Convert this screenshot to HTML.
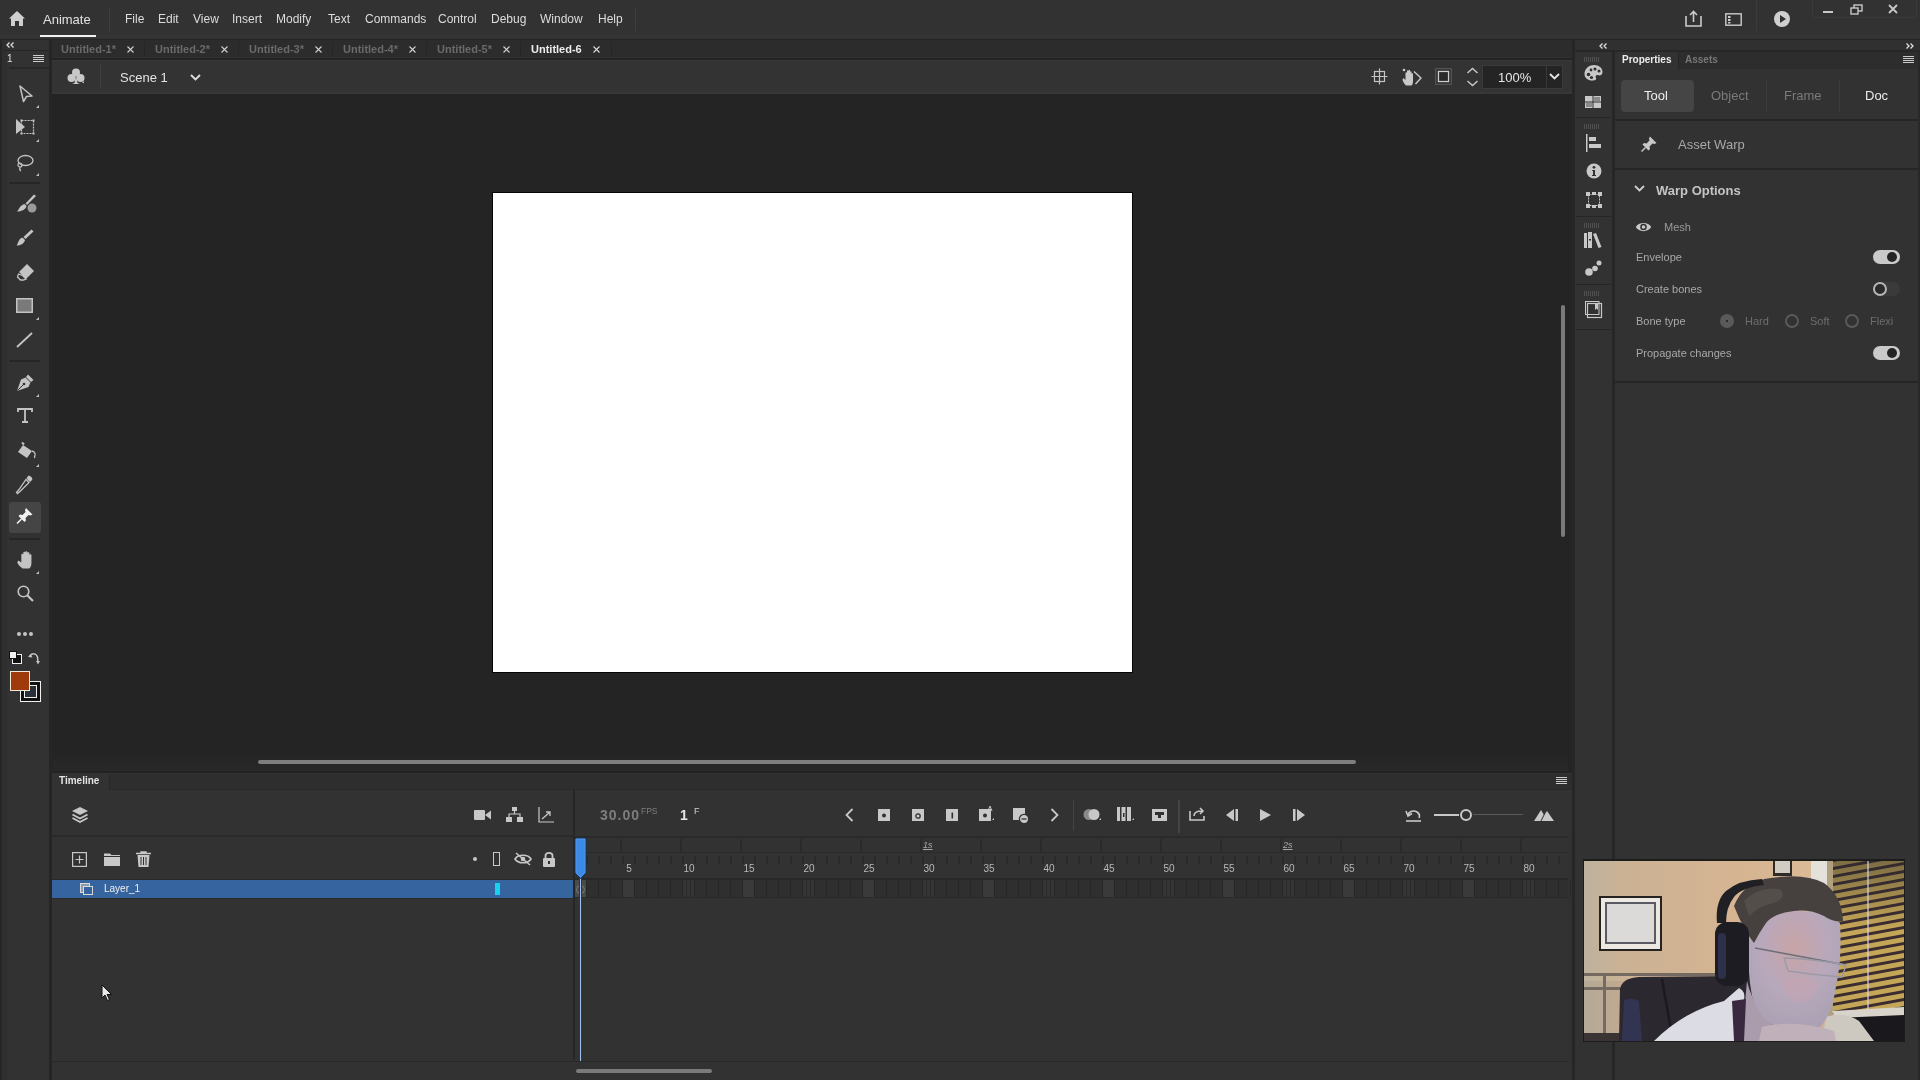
<!DOCTYPE html>
<html><head><meta charset="utf-8">
<style>
*{margin:0;padding:0;box-sizing:border-box}
html,body{width:1920px;height:1080px;overflow:hidden;background:#323232;-webkit-font-smoothing:antialiased;font-family:"Liberation Sans",sans-serif;color:#d0d0d0}
.a{position:absolute}
.t{position:absolute;white-space:nowrap;line-height:1;will-change:transform}
svg{position:absolute;overflow:visible}
.mi{will-change:transform;position:absolute;top:13px;font-size:12px;color:#dcdcdc;white-space:nowrap;line-height:1}
.tab{will-change:transform;position:absolute;top:44px;font-size:11px;font-weight:bold;color:#6a6a6a;white-space:nowrap;line-height:1}
.tsep{position:absolute;top:41px;width:1px;height:15px;background:#262626}
.ind{position:absolute;width:0;height:0;border-left:3px solid transparent;border-bottom:3px solid #bdbdbd}
.tsepH{position:absolute;left:9px;width:31px;height:2px;background:#262626}
.pl{will-change:transform;position:absolute;font-size:11px;color:#a8a8a8;white-space:nowrap;line-height:1}
</style></head><body>

<!-- ================= MENU BAR ================= -->
<div class="a" style="left:0;top:0;width:1920px;height:39px;background:#323232"></div>
<div class="a" style="left:0;top:35px;width:1920px;height:3px;background:#343434"></div>
<div class="a" style="left:0;top:39px;width:1920px;height:1px;background:#262626"></div>
<!-- home -->
<svg style="left:8px;top:10px" width="18" height="17" viewBox="0 0 18 17"><path d="M9 1 L17 8.5 L15 8.5 L15 16 L11 16 L11 11 L7 11 L7 16 L3 16 L3 8.5 L1 8.5 Z" fill="#cfcfcf"/></svg>
<div class="t" style="left:43px;top:13px;font-size:13px;color:#e2e2e2">Animate</div>
<div class="a" style="left:40px;top:35px;width:56px;height:2px;background:#f2f2f2"></div>
<div class="a" style="left:109px;top:8px;width:1px;height:24px;background:#3e3e3e"></div>
<div class="mi" style="left:125px">File</div>
<div class="mi" style="left:158px">Edit</div>
<div class="mi" style="left:193px">View</div>
<div class="mi" style="left:232px">Insert</div>
<div class="mi" style="left:276px">Modify</div>
<div class="mi" style="left:328px">Text</div>
<div class="mi" style="left:365px">Commands</div>
<div class="mi" style="left:438px">Control</div>
<div class="mi" style="left:491px">Debug</div>
<div class="mi" style="left:540px">Window</div>
<div class="mi" style="left:598px">Help</div>
<div class="a" style="left:635px;top:8px;width:1px;height:23px;background:#3e3e3e"></div>
<!-- right icons -->
<svg style="left:1685px;top:10px" width="17" height="17" viewBox="0 0 17 17"><path d="M1 6 V16 H16 V6" fill="none" stroke="#cccccc" stroke-width="1.6"/><path d="M8.5 12 V1.5 M5 5 L8.5 1.5 L12 5" fill="none" stroke="#cccccc" stroke-width="1.6"/></svg>
<svg style="left:1725px;top:13px" width="17" height="13" viewBox="0 0 17 13"><rect x="0.8" y="0.8" width="15.4" height="11.4" fill="none" stroke="#cccccc" stroke-width="1.4"/><rect x="3" y="3" width="2.5" height="2" fill="#cccccc"/><rect x="3" y="6" width="2.5" height="2" fill="#cccccc"/><rect x="3" y="9" width="2.5" height="1.5" fill="#cccccc"/></svg>
<div class="a" style="left:1756px;top:0;width:1px;height:31px;background:#3c3c3c"></div>
<svg style="left:1773px;top:10px" width="18" height="18" viewBox="0 0 18 18"><circle cx="9" cy="9" r="8" fill="#cfcfcf"/><path d="M7 5 L13 9 L7 13 Z" fill="#303030"/></svg>
<div class="a" style="left:1812px;top:-1px;width:105px;height:19px;border:1px solid #3a3a3a;border-radius:0 0 3px 3px"></div>
<div class="a" style="left:1823px;top:11px;width:10px;height:2px;background:#c8c8c8"></div>
<svg style="left:1850px;top:4px" width="13" height="11" viewBox="0 0 13 11"><rect x="4" y="1" width="8" height="6" fill="none" stroke="#c8c8c8" stroke-width="1.4"/><rect x="1" y="4" width="7" height="6" fill="#303030" stroke="#c8c8c8" stroke-width="1.4"/></svg>
<svg style="left:1888px;top:4px" width="10" height="10" viewBox="0 0 10 10"><path d="M1 1 L9 9 M9 1 L1 9" stroke="#c8c8c8" stroke-width="1.8"/></svg>

<!-- ================= LEFT TOOLBAR ================= -->
<div class="a" style="left:0;top:40px;width:49px;height:1040px;background:#323232"></div>
<div class="a" style="left:0;top:40px;width:2px;height:1040px;background:#262626"></div>
<div class="a" style="left:2px;top:40px;width:5px;height:1040px;background:#2f2f2f"></div>
<div class="a" style="left:49px;top:40px;width:3px;height:1040px;background:#252525"></div>
<svg style="left:6px;top:42px" width="9" height="6" viewBox="0 0 9 6"><path d="M3.5 0.5 L1 3 L3.5 5.5 M7.5 0.5 L5 3 L7.5 5.5" fill="none" stroke="#e0e0e0" stroke-width="1.3"/></svg>
<div class="a" style="left:3px;top:50px;width:46px;height:1px;background:#262626"></div>
<div class="t" style="left:7px;top:54px;font-size:10px;color:#e0e0e0">1</div>
<svg style="left:33px;top:55px" width="11" height="8" viewBox="0 0 11 8"><path d="M0 0.5H11M0 2.5H11M0 4.5H11M0 6.5H11" stroke="#cccccc" stroke-width="1"/></svg>
<div class="a" style="left:9px;top:67px;width:40px;height:2px;background:#282828"></div>


<!-- ================= DOC TABS ================= -->
<div class="a" style="left:52px;top:40px;width:1520px;height:17px;background:#2c2c2c"></div>
<div class="a" style="left:52px;top:57px;width:1520px;height:1px;background:#313131"></div>
<div class="a" style="left:52px;top:58px;width:1520px;height:2px;background:#232323"></div>
<div class="tab" style="left:61px">Untitled-1*</div>
<div class="tab" style="left:155px">Untitled-2*</div>
<div class="tab" style="left:249px">Untitled-3*</div>
<div class="tab" style="left:343px">Untitled-4*</div>
<div class="tab" style="left:437px">Untitled-5*</div>
<div class="tab" style="left:531px;color:#ececec">Untitled-6</div>
<svg style="left:127px;top:46px" width="7" height="7" viewBox="0 0 7 7"><path d="M0.5 0.5L6.5 6.5M6.5 0.5L0.5 6.5" stroke="#cfcfcf" stroke-width="1.1"/></svg>
<svg style="left:221px;top:46px" width="7" height="7" viewBox="0 0 7 7"><path d="M0.5 0.5L6.5 6.5M6.5 0.5L0.5 6.5" stroke="#cfcfcf" stroke-width="1.1"/></svg>
<svg style="left:315px;top:46px" width="7" height="7" viewBox="0 0 7 7"><path d="M0.5 0.5L6.5 6.5M6.5 0.5L0.5 6.5" stroke="#cfcfcf" stroke-width="1.1"/></svg>
<svg style="left:409px;top:46px" width="7" height="7" viewBox="0 0 7 7"><path d="M0.5 0.5L6.5 6.5M6.5 0.5L0.5 6.5" stroke="#cfcfcf" stroke-width="1.1"/></svg>
<svg style="left:503px;top:46px" width="7" height="7" viewBox="0 0 7 7"><path d="M0.5 0.5L6.5 6.5M6.5 0.5L0.5 6.5" stroke="#cfcfcf" stroke-width="1.1"/></svg>
<svg style="left:593px;top:46px" width="7" height="7" viewBox="0 0 7 7"><path d="M0.5 0.5L6.5 6.5M6.5 0.5L0.5 6.5" stroke="#dcdcdc" stroke-width="1.1"/></svg>
<div class="tsep" style="left:144px"></div>
<div class="tsep" style="left:238px"></div>
<div class="tsep" style="left:332px"></div>
<div class="tsep" style="left:426px"></div>
<div class="tsep" style="left:520px"></div>
<div class="tsep" style="left:611px"></div>

<!-- ================= SCENE BAR ================= -->
<div class="a" style="left:52px;top:60px;width:1520px;height:34px;background:#333333"></div>
<div class="a" style="left:52px;top:60px;width:1520px;height:1px;background:#383838"></div>
<div class="a" style="left:52px;top:92px;width:1520px;height:2px;background:#373737"></div>
<svg style="left:67px;top:68px" width="19" height="18" viewBox="0 0 19 18"><circle cx="9" cy="4.5" r="4" fill="#c8c8c8"/><circle cx="4.5" cy="10" r="4" fill="#c8c8c8"/><circle cx="13.5" cy="10" r="4" fill="#c8c8c8"/><path d="M9 7 L7.5 15 L5 16 H13 L10.5 15 Z" fill="#c8c8c8"/><path d="M15 15 L17 15 L17 13 Z" fill="#c8c8c8"/></svg>
<div class="a" style="left:100px;top:64px;width:1px;height:25px;background:#3e3e3e"></div>
<div class="t" style="left:120px;top:71px;font-size:13px;color:#e2e2e2">Scene 1</div>
<svg style="left:190px;top:74px" width="11" height="7" viewBox="0 0 11 7"><path d="M1 1 L5.5 5.5 L10 1" fill="none" stroke="#e0e0e0" stroke-width="1.8"/></svg>

<svg style="left:1371px;top:68px" width="17" height="17" viewBox="0 0 17 17"><rect x="3.5" y="3.5" width="10" height="10" fill="none" stroke="#c4c4c4" stroke-width="1.2"/><path d="M8.5 0.5V16.5M0.5 8.5H16.5" stroke="#c4c4c4" stroke-width="1.2"/></svg>
<svg style="left:1401px;top:68px" width="22" height="18" viewBox="0 0 22 18"><path d="M5 17.5 C3 15.5 1.5 13 1.5 11.5 L2.5 10 L4.5 12 V5 C4.5 4 6 4 6 5 V9.5 V3 C6 2 7.5 2 7.5 3 V9.5 V2.5 C7.5 1.5 9 1.5 9 2.5 V9.5 V4 C9 3 10.5 3 10.5 4 V9.5 V6 C10.5 5 12 5 12 6 V13 C12 16 11 17.5 10 17.5 Z" fill="#c8c8c8"/><path d="M13 3.5 L20 10 L14.5 16" fill="none" stroke="#c8c8c8" stroke-width="1.4"/><circle cx="3" cy="2" r="1.3" fill="#c8c8c8"/></svg>
<svg style="left:1435px;top:68px" width="17" height="17" viewBox="0 0 17 17"><rect x="0.5" y="0.5" width="16" height="16" fill="#3a3a3a" stroke="#707070" stroke-dasharray="1 1"/><rect x="3.5" y="3.5" width="10" height="10" fill="#2a2a2a" stroke="#cfcfcf" stroke-width="1.2"/></svg>
<svg style="left:1466px;top:67px" width="13" height="20" viewBox="0 0 13 20"><path d="M1.5 6 L6.5 1.5 L11.5 6 M1.5 14 L6.5 18.5 L11.5 14" fill="none" stroke="#c8c8c8" stroke-width="1.4"/></svg>
<div class="a" style="left:1482px;top:65px;width:81px;height:24px;background:#242424;border:1px solid #3a3a3a"></div>
<div class="a" style="left:1546px;top:66px;width:1px;height:22px;background:#3a3a3a"></div>
<div class="t" style="left:1498px;top:71px;font-size:13px;color:#e6e6e6">100%</div>
<svg style="left:1549px;top:73px" width="11" height="7" viewBox="0 0 11 7"><path d="M1 1 L5.5 5.5 L10 1" fill="none" stroke="#e6e6e6" stroke-width="1.8"/></svg>

<!-- ================= PASTEBOARD ================= -->
<div class="a" style="left:52px;top:94px;width:1520px;height:677px;background:#242424"></div>
<div class="a" style="left:492px;top:192px;width:641px;height:481px;background:#ffffff;border:1px solid #050505"></div>
<div class="a" style="left:1561px;top:305px;width:4px;height:232px;background:#7a7a7a;border-radius:2px"></div>
<div class="a" style="left:52px;top:752px;width:1516px;height:19px;background:linear-gradient(#242424,#282828)"></div>
<div class="a" style="left:258px;top:760px;width:1098px;height:4px;background:#7e7e7e;border-radius:2px"></div>
<div class="a" style="left:52px;top:771px;width:1520px;height:2px;background:#232323"></div>


<!-- ================= TIMELINE ================= -->
<div class="a" style="left:52px;top:773px;width:1520px;height:307px;background:#323232"></div>
<div class="a" style="left:110px;top:774px;width:1462px;height:16px;background:#2e2e2e"></div>
<div class="a" style="left:110px;top:789px;width:1462px;height:1px;background:#2a2a2a"></div>
<div class="a" style="left:109px;top:774px;width:1px;height:16px;background:#272727"></div>
<div class="t" style="left:59px;top:776px;font-size:10px;font-weight:bold;color:#e4e4e4">Timeline</div>
<svg style="left:1556px;top:777px" width="11" height="7" viewBox="0 0 11 7"><path d="M0 0.5H11M0 2.5H11M0 4.5H11M0 6.5H11" stroke="#cccccc" stroke-width="1"/></svg>
<!-- toolbar row -->
<svg style="left:71px;top:806px" width="18" height="18" viewBox="0 0 18 18"><path d="M9 1 L17 5 L9 9 L1 5 Z" fill="#c8c8c8"/><path d="M1.5 8.5 L9 12.5 L16.5 8.5" fill="none" stroke="#c8c8c8" stroke-width="1.8"/><path d="M1.5 12 L9 16 L16.5 12" fill="none" stroke="#c8c8c8" stroke-width="1.8"/></svg>
<svg style="left:474px;top:809px" width="17" height="12" viewBox="0 0 17 12"><rect x="0" y="1" width="11" height="10" rx="1" fill="#c8c8c8"/><path d="M11 6 L17 1.5 V10.5 Z" fill="#c8c8c8"/></svg>
<svg style="left:506px;top:807px" width="17" height="16" viewBox="0 0 17 16"><rect x="6" y="0" width="5" height="4" fill="#c8c8c8"/><path d="M8.5 4V7M3 10V7H14V10" fill="none" stroke="#c8c8c8" stroke-width="1.2"/><rect x="0" y="10" width="6" height="5" fill="#c8c8c8"/><rect x="11" y="10" width="6" height="5" fill="#c8c8c8"/></svg>
<svg style="left:538px;top:807px" width="16" height="16" viewBox="0 0 16 16"><path d="M1 0V15H16" fill="none" stroke="#c8c8c8" stroke-width="1.2"/><path d="M4 12L12 5M8 5H12V9" fill="none" stroke="#c8c8c8" stroke-width="1.3"/></svg>
<div class="a" style="left:52px;top:835px;width:521px;height:2px;background:#2a2a2a"></div>
<div class="a" style="left:573px;top:790px;width:2px;height:270px;background:#262626"></div>
<div class="t" style="left:600px;top:808px;font-size:14px;font-weight:bold;letter-spacing:1px;color:#7e7e7e">30.00</div>
<div class="t" style="left:641px;top:807px;font-size:8.5px;color:#7e7e7e">FPS</div>
<div class="t" style="left:680px;top:808px;font-size:14px;font-weight:bold;color:#e6e6e6">1</div>
<div class="t" style="left:694px;top:807px;font-size:9px;color:#d0d0d0">F</div>
<svg style="left:845px;top:808px" width="9" height="14" viewBox="0 0 9 14"><path d="M7.5 1 L1.5 7 L7.5 13" fill="none" stroke="#c8c8c8" stroke-width="1.8"/></svg>
<svg style="left:878px;top:809px" width="12" height="12" viewBox="0 0 12 12"><rect width="12" height="12" fill="#c8c8c8"/><circle cx="6" cy="6.5" r="2" fill="#303030"/></svg>
<svg style="left:912px;top:809px" width="12" height="12" viewBox="0 0 12 12"><rect width="12" height="12" fill="#c8c8c8"/><circle cx="6" cy="7" r="2.2" fill="none" stroke="#303030" stroke-width="1.3"/></svg>
<svg style="left:946px;top:809px" width="12" height="12" viewBox="0 0 12 12"><rect width="12" height="12" fill="#c8c8c8"/><rect x="5.5" y="3.5" width="1.6" height="6" fill="#303030"/></svg>
<svg style="left:979px;top:806px" width="15" height="16" viewBox="0 0 15 16"><rect x="0" y="3" width="12" height="12" fill="#c8c8c8"/><circle cx="6" cy="9.5" r="2" fill="#303030"/><path d="M9 5 L11 0 L13 5" fill="none" stroke="#c8c8c8" stroke-width="1"/><path d="M13 14 L15 14 L15 12 Z" fill="#c8c8c8"/></svg>
<svg style="left:1013px;top:808px" width="17" height="16" viewBox="0 0 17 16"><rect x="0" y="0" width="12" height="12" fill="#c8c8c8"/><circle cx="11" cy="11" r="4.6" fill="#c8c8c8" stroke="#303030" stroke-width="1.2"/><path d="M8.5 11H13.5" stroke="#303030" stroke-width="1.3"/></svg>
<svg style="left:1050px;top:808px" width="9" height="14" viewBox="0 0 9 14"><path d="M1.5 1 L7.5 7 L1.5 13" fill="none" stroke="#c8c8c8" stroke-width="1.8"/></svg>
<div class="a" style="left:1073px;top:800px;width:1px;height:31px;background:#444"></div>
<svg style="left:1083px;top:807px" width="18" height="15" viewBox="0 0 18 15"><circle cx="6" cy="7.5" r="5.5" fill="#8a8a8a"/><circle cx="11" cy="7.5" r="5.5" fill="#c8c8c8"/><path d="M16 13 L18 13 L18 11 Z" fill="#c8c8c8"/></svg>
<svg style="left:1117px;top:807px" width="18" height="15" viewBox="0 0 18 15"><rect x="0" y="0" width="3" height="14" fill="#c8c8c8"/><rect x="4.5" y="0" width="4" height="14" fill="#c8c8c8"/><rect x="10" y="0" width="4" height="14" fill="#c8c8c8"/><rect x="6" y="6" width="1.5" height="4" fill="#303030"/><path d="M15 13 L17 13 L17 11 Z" fill="#c8c8c8"/></svg>
<svg style="left:1152px;top:809px" width="15" height="12" viewBox="0 0 15 12"><rect width="15" height="12" fill="#c8c8c8"/><path d="M3 3 H12 V6 H9 V9 H6 V6 H3 Z" fill="#303030"/></svg>
<div class="a" style="left:1178px;top:800px;width:2px;height:33px;background:#444"></div>
<svg style="left:1189px;top:806px" width="17" height="16" viewBox="0 0 17 16"><path d="M1 5V14H15V10" fill="none" stroke="#c8c8c8" stroke-width="1.6"/><path d="M5 10C5 6 8 5 13 5M11 2L14 5L11 8" fill="none" stroke="#c8c8c8" stroke-width="1.6"/></svg>
<svg style="left:1225px;top:808px" width="14" height="14" viewBox="0 0 14 14"><path d="M9 1 L1 7 L9 13 Z" fill="#c8c8c8"/><rect x="10.5" y="1" width="2.5" height="12" fill="#c8c8c8"/></svg>
<svg style="left:1259px;top:808px" width="12" height="14" viewBox="0 0 12 14"><path d="M1 1 L12 7 L1 13 Z" fill="#c8c8c8"/></svg>
<svg style="left:1292px;top:808px" width="14" height="14" viewBox="0 0 14 14"><rect x="1" y="1" width="2.5" height="12" fill="#c8c8c8"/><path d="M5 1 L13 7 L5 13 Z" fill="#c8c8c8"/></svg>
<svg style="left:1405px;top:808px" width="17" height="14" viewBox="0 0 17 14"><path d="M3 7 C4 3 9 2 12 4 C14 5.5 15 8 14 10" fill="none" stroke="#c8c8c8" stroke-width="1.6"/><path d="M1 3 L3 8 L7 5.5" fill="none" stroke="#c8c8c8" stroke-width="1.6"/><path d="M1 13H16" stroke="#c8c8c8" stroke-width="1.6"/></svg>
<div class="a" style="left:1434px;top:814px;width:25px;height:2px;background:#c8c8c8"></div>
<div class="a" style="left:1460px;top:809px;width:12px;height:12px;border:2px solid #c8c8c8;border-radius:50%"></div>
<div class="a" style="left:1473px;top:814px;width:50px;height:1px;background:#5a5a5a"></div>
<svg style="left:1534px;top:808px" width="20" height="14" viewBox="0 0 20 14"><path d="M0 13 L7 2 L10 7 L13 3 L20 13 Z" fill="#c8c8c8"/><path d="M7 13 L11 5" stroke="#303030" stroke-width="1"/></svg>
<!-- layer controls row -->
<svg style="left:72px;top:852px" width="15" height="15" viewBox="0 0 15 15"><rect x="0.6" y="0.6" width="13.8" height="13.8" fill="none" stroke="#c8c8c8" stroke-width="1.2"/><path d="M7.5 3.5V11.5M3.5 7.5H11.5" stroke="#c8c8c8" stroke-width="1.2"/></svg>
<svg style="left:104px;top:852px" width="17" height="14" viewBox="0 0 17 14"><path d="M0 1.5 H6 L7.5 3 H16 V14 H0 Z" fill="#c8c8c8"/><path d="M0 4.5 H16" stroke="#303030" stroke-width="1"/></svg>
<svg style="left:136px;top:851px" width="15" height="16" viewBox="0 0 15 16"><path d="M0 2.5H15M5 2.5V1H10V2.5" fill="none" stroke="#c8c8c8" stroke-width="1.4"/><path d="M1.5 4 H13.5 L12.5 16 H2.5 Z" fill="#c8c8c8"/><path d="M5 6V14M7.5 6V14M10 6V14" stroke="#303030" stroke-width="1"/></svg>
<div class="a" style="left:473px;top:857px;width:4px;height:4px;background:#c8c8c8;border-radius:50%"></div>
<div class="a" style="left:493px;top:852px;width:7px;height:14px;border:1.5px solid #c8c8c8"></div>
<svg style="left:514px;top:852px" width="18" height="14" viewBox="0 0 18 14"><path d="M1 7 C4 2 14 2 17 7 C14 12 4 12 1 7 Z" fill="none" stroke="#c8c8c8" stroke-width="1.6"/><circle cx="9" cy="7" r="2.3" fill="#c8c8c8"/><path d="M2 1 L16 13" stroke="#c8c8c8" stroke-width="1.6"/></svg>
<svg style="left:542px;top:851px" width="14" height="16" viewBox="0 0 14 16"><path d="M3.5 7V4.5C3.5 1 10.5 1 10.5 4.5V7" fill="none" stroke="#c8c8c8" stroke-width="1.8"/><rect x="1" y="7" width="12" height="9" rx="1" fill="#c8c8c8"/><rect x="6" y="10" width="2" height="3" fill="#303030"/></svg>
<div class="a" style="left:52px;top:879px;width:521px;height:1px;background:#2a2a2a"></div>
<!-- selected layer -->
<div class="a" style="left:52px;top:880px;width:521px;height:18px;background:#35649e"></div>
<svg style="left:80px;top:883px" width="13" height="12" viewBox="0 0 13 12"><rect x="0.5" y="0.5" width="9" height="9" fill="#8a9ab0" stroke="#d8d8d8"/><rect x="3.5" y="3.5" width="9" height="8" fill="#35649e" stroke="#d8d8d8"/></svg>
<div class="t" style="left:104px;top:884px;font-size:10px;color:#f0f0f0">Layer_1</div>
<div class="a" style="left:495px;top:883px;width:5px;height:12px;background:#17d3f0"></div>
<div class="a" style="left:52px;top:898px;width:521px;height:1px;background:#2a2a2a"></div>
<!-- ruler -->
<div class="a" style="left:575px;top:836px;width:993px;height:2px;background:#2a2a2a"></div>
<div class="a" style="left:575px;top:852px;width:993px;height:1px;background:#2a2a2a"></div>
<div class="a" style="left:575px;top:878px;width:993px;height:2px;background:#282828"></div>
<div class="a" style="left:1568px;top:836px;width:4px;height:224px;background:#313131"></div>
<div class="a" style="left:575px;top:880px;width:993px;height:17px;background:#2f2f2f"></div>
<div class="a" style="left:574px;top:856px;width:2px;height:8px;background:#2a2a2a"></div>
<div class="a" style="left:575px;top:880px;width:11px;height:17px;background:#4a4a4a"></div>
<div class="a" style="left:586px;top:880px;width:1px;height:17px;background:#272727"></div>
<div class="a" style="left:586px;top:856px;width:2px;height:8px;background:#2a2a2a"></div>
<div class="a" style="left:598px;top:880px;width:1px;height:17px;background:#272727"></div>
<div class="a" style="left:598px;top:856px;width:2px;height:8px;background:#2a2a2a"></div>
<div class="a" style="left:610px;top:880px;width:1px;height:17px;background:#272727"></div>
<div class="a" style="left:610px;top:856px;width:2px;height:8px;background:#2a2a2a"></div>
<div class="a" style="left:622px;top:880px;width:1px;height:17px;background:#272727"></div>
<div class="a" style="left:622px;top:856px;width:2px;height:8px;background:#2a2a2a"></div>
<div class="a" style="left:620px;top:839px;width:2px;height:13px;background:#2a2a2a"></div>
<div class="t" style="left:608.5px;width:40px;text-align:center;top:864px;font-size:10px;color:#b8b8b8">5</div>
<div class="a" style="left:623px;top:880px;width:11px;height:17px;background:#3a3a3a"></div>
<div class="a" style="left:634px;top:880px;width:1px;height:17px;background:#272727"></div>
<div class="a" style="left:634px;top:856px;width:2px;height:8px;background:#2a2a2a"></div>
<div class="a" style="left:646px;top:880px;width:1px;height:17px;background:#272727"></div>
<div class="a" style="left:646px;top:856px;width:2px;height:8px;background:#2a2a2a"></div>
<div class="a" style="left:658px;top:880px;width:1px;height:17px;background:#272727"></div>
<div class="a" style="left:658px;top:856px;width:2px;height:8px;background:#2a2a2a"></div>
<div class="a" style="left:670px;top:880px;width:1px;height:17px;background:#272727"></div>
<div class="a" style="left:670px;top:856px;width:2px;height:8px;background:#2a2a2a"></div>
<div class="a" style="left:682px;top:880px;width:1px;height:17px;background:#272727"></div>
<div class="a" style="left:682px;top:856px;width:2px;height:8px;background:#2a2a2a"></div>
<div class="a" style="left:680px;top:839px;width:2px;height:13px;background:#2a2a2a"></div>
<div class="t" style="left:668.5px;width:40px;text-align:center;top:864px;font-size:10px;color:#b8b8b8">10</div>
<div class="a" style="left:683px;top:880px;width:11px;height:17px;background:#353535"></div>
<div class="a" style="left:686px;top:880px;width:1px;height:17px;background:#2a2a2a"></div>
<div class="a" style="left:690px;top:880px;width:1px;height:17px;background:#2a2a2a"></div>
<div class="a" style="left:694px;top:880px;width:1px;height:17px;background:#272727"></div>
<div class="a" style="left:694px;top:856px;width:2px;height:8px;background:#2a2a2a"></div>
<div class="a" style="left:706px;top:880px;width:1px;height:17px;background:#272727"></div>
<div class="a" style="left:706px;top:856px;width:2px;height:8px;background:#2a2a2a"></div>
<div class="a" style="left:718px;top:880px;width:1px;height:17px;background:#272727"></div>
<div class="a" style="left:718px;top:856px;width:2px;height:8px;background:#2a2a2a"></div>
<div class="a" style="left:730px;top:880px;width:1px;height:17px;background:#272727"></div>
<div class="a" style="left:730px;top:856px;width:2px;height:8px;background:#2a2a2a"></div>
<div class="a" style="left:742px;top:880px;width:1px;height:17px;background:#272727"></div>
<div class="a" style="left:742px;top:856px;width:2px;height:8px;background:#2a2a2a"></div>
<div class="a" style="left:740px;top:839px;width:2px;height:13px;background:#2a2a2a"></div>
<div class="t" style="left:728.5px;width:40px;text-align:center;top:864px;font-size:10px;color:#b8b8b8">15</div>
<div class="a" style="left:743px;top:880px;width:11px;height:17px;background:#3a3a3a"></div>
<div class="a" style="left:754px;top:880px;width:1px;height:17px;background:#272727"></div>
<div class="a" style="left:754px;top:856px;width:2px;height:8px;background:#2a2a2a"></div>
<div class="a" style="left:766px;top:880px;width:1px;height:17px;background:#272727"></div>
<div class="a" style="left:766px;top:856px;width:2px;height:8px;background:#2a2a2a"></div>
<div class="a" style="left:778px;top:880px;width:1px;height:17px;background:#272727"></div>
<div class="a" style="left:778px;top:856px;width:2px;height:8px;background:#2a2a2a"></div>
<div class="a" style="left:790px;top:880px;width:1px;height:17px;background:#272727"></div>
<div class="a" style="left:790px;top:856px;width:2px;height:8px;background:#2a2a2a"></div>
<div class="a" style="left:802px;top:880px;width:1px;height:17px;background:#272727"></div>
<div class="a" style="left:802px;top:856px;width:2px;height:8px;background:#2a2a2a"></div>
<div class="a" style="left:800px;top:839px;width:2px;height:13px;background:#2a2a2a"></div>
<div class="t" style="left:788.5px;width:40px;text-align:center;top:864px;font-size:10px;color:#b8b8b8">20</div>
<div class="a" style="left:803px;top:880px;width:11px;height:17px;background:#353535"></div>
<div class="a" style="left:806px;top:880px;width:1px;height:17px;background:#2a2a2a"></div>
<div class="a" style="left:810px;top:880px;width:1px;height:17px;background:#2a2a2a"></div>
<div class="a" style="left:814px;top:880px;width:1px;height:17px;background:#272727"></div>
<div class="a" style="left:814px;top:856px;width:2px;height:8px;background:#2a2a2a"></div>
<div class="a" style="left:826px;top:880px;width:1px;height:17px;background:#272727"></div>
<div class="a" style="left:826px;top:856px;width:2px;height:8px;background:#2a2a2a"></div>
<div class="a" style="left:838px;top:880px;width:1px;height:17px;background:#272727"></div>
<div class="a" style="left:838px;top:856px;width:2px;height:8px;background:#2a2a2a"></div>
<div class="a" style="left:850px;top:880px;width:1px;height:17px;background:#272727"></div>
<div class="a" style="left:850px;top:856px;width:2px;height:8px;background:#2a2a2a"></div>
<div class="a" style="left:862px;top:880px;width:1px;height:17px;background:#272727"></div>
<div class="a" style="left:862px;top:856px;width:2px;height:8px;background:#2a2a2a"></div>
<div class="a" style="left:860px;top:839px;width:2px;height:13px;background:#2a2a2a"></div>
<div class="t" style="left:848.5px;width:40px;text-align:center;top:864px;font-size:10px;color:#b8b8b8">25</div>
<div class="a" style="left:863px;top:880px;width:11px;height:17px;background:#3a3a3a"></div>
<div class="a" style="left:874px;top:880px;width:1px;height:17px;background:#272727"></div>
<div class="a" style="left:874px;top:856px;width:2px;height:8px;background:#2a2a2a"></div>
<div class="a" style="left:886px;top:880px;width:1px;height:17px;background:#272727"></div>
<div class="a" style="left:886px;top:856px;width:2px;height:8px;background:#2a2a2a"></div>
<div class="a" style="left:898px;top:880px;width:1px;height:17px;background:#272727"></div>
<div class="a" style="left:898px;top:856px;width:2px;height:8px;background:#2a2a2a"></div>
<div class="a" style="left:910px;top:880px;width:1px;height:17px;background:#272727"></div>
<div class="a" style="left:910px;top:856px;width:2px;height:8px;background:#2a2a2a"></div>
<div class="a" style="left:922px;top:880px;width:1px;height:17px;background:#272727"></div>
<div class="a" style="left:922px;top:856px;width:2px;height:8px;background:#2a2a2a"></div>
<div class="a" style="left:920px;top:839px;width:2px;height:13px;background:#2a2a2a"></div>
<div class="t" style="left:908.5px;width:40px;text-align:center;top:864px;font-size:10px;color:#b8b8b8">30</div>
<div class="a" style="left:923px;top:880px;width:11px;height:17px;background:#353535"></div>
<div class="a" style="left:926px;top:880px;width:1px;height:17px;background:#2a2a2a"></div>
<div class="a" style="left:930px;top:880px;width:1px;height:17px;background:#2a2a2a"></div>
<div class="a" style="left:934px;top:880px;width:1px;height:17px;background:#272727"></div>
<div class="a" style="left:934px;top:856px;width:2px;height:8px;background:#2a2a2a"></div>
<div class="a" style="left:946px;top:880px;width:1px;height:17px;background:#272727"></div>
<div class="a" style="left:946px;top:856px;width:2px;height:8px;background:#2a2a2a"></div>
<div class="a" style="left:958px;top:880px;width:1px;height:17px;background:#272727"></div>
<div class="a" style="left:958px;top:856px;width:2px;height:8px;background:#2a2a2a"></div>
<div class="a" style="left:970px;top:880px;width:1px;height:17px;background:#272727"></div>
<div class="a" style="left:970px;top:856px;width:2px;height:8px;background:#2a2a2a"></div>
<div class="a" style="left:982px;top:880px;width:1px;height:17px;background:#272727"></div>
<div class="a" style="left:982px;top:856px;width:2px;height:8px;background:#2a2a2a"></div>
<div class="a" style="left:980px;top:839px;width:2px;height:13px;background:#2a2a2a"></div>
<div class="t" style="left:968.5px;width:40px;text-align:center;top:864px;font-size:10px;color:#b8b8b8">35</div>
<div class="a" style="left:983px;top:880px;width:11px;height:17px;background:#3a3a3a"></div>
<div class="a" style="left:994px;top:880px;width:1px;height:17px;background:#272727"></div>
<div class="a" style="left:994px;top:856px;width:2px;height:8px;background:#2a2a2a"></div>
<div class="a" style="left:1006px;top:880px;width:1px;height:17px;background:#272727"></div>
<div class="a" style="left:1006px;top:856px;width:2px;height:8px;background:#2a2a2a"></div>
<div class="a" style="left:1018px;top:880px;width:1px;height:17px;background:#272727"></div>
<div class="a" style="left:1018px;top:856px;width:2px;height:8px;background:#2a2a2a"></div>
<div class="a" style="left:1030px;top:880px;width:1px;height:17px;background:#272727"></div>
<div class="a" style="left:1030px;top:856px;width:2px;height:8px;background:#2a2a2a"></div>
<div class="a" style="left:1042px;top:880px;width:1px;height:17px;background:#272727"></div>
<div class="a" style="left:1042px;top:856px;width:2px;height:8px;background:#2a2a2a"></div>
<div class="a" style="left:1040px;top:839px;width:2px;height:13px;background:#2a2a2a"></div>
<div class="t" style="left:1028.5px;width:40px;text-align:center;top:864px;font-size:10px;color:#b8b8b8">40</div>
<div class="a" style="left:1043px;top:880px;width:11px;height:17px;background:#353535"></div>
<div class="a" style="left:1046px;top:880px;width:1px;height:17px;background:#2a2a2a"></div>
<div class="a" style="left:1050px;top:880px;width:1px;height:17px;background:#2a2a2a"></div>
<div class="a" style="left:1054px;top:880px;width:1px;height:17px;background:#272727"></div>
<div class="a" style="left:1054px;top:856px;width:2px;height:8px;background:#2a2a2a"></div>
<div class="a" style="left:1066px;top:880px;width:1px;height:17px;background:#272727"></div>
<div class="a" style="left:1066px;top:856px;width:2px;height:8px;background:#2a2a2a"></div>
<div class="a" style="left:1078px;top:880px;width:1px;height:17px;background:#272727"></div>
<div class="a" style="left:1078px;top:856px;width:2px;height:8px;background:#2a2a2a"></div>
<div class="a" style="left:1090px;top:880px;width:1px;height:17px;background:#272727"></div>
<div class="a" style="left:1090px;top:856px;width:2px;height:8px;background:#2a2a2a"></div>
<div class="a" style="left:1102px;top:880px;width:1px;height:17px;background:#272727"></div>
<div class="a" style="left:1102px;top:856px;width:2px;height:8px;background:#2a2a2a"></div>
<div class="a" style="left:1100px;top:839px;width:2px;height:13px;background:#2a2a2a"></div>
<div class="t" style="left:1088.5px;width:40px;text-align:center;top:864px;font-size:10px;color:#b8b8b8">45</div>
<div class="a" style="left:1103px;top:880px;width:11px;height:17px;background:#3a3a3a"></div>
<div class="a" style="left:1114px;top:880px;width:1px;height:17px;background:#272727"></div>
<div class="a" style="left:1114px;top:856px;width:2px;height:8px;background:#2a2a2a"></div>
<div class="a" style="left:1126px;top:880px;width:1px;height:17px;background:#272727"></div>
<div class="a" style="left:1126px;top:856px;width:2px;height:8px;background:#2a2a2a"></div>
<div class="a" style="left:1138px;top:880px;width:1px;height:17px;background:#272727"></div>
<div class="a" style="left:1138px;top:856px;width:2px;height:8px;background:#2a2a2a"></div>
<div class="a" style="left:1150px;top:880px;width:1px;height:17px;background:#272727"></div>
<div class="a" style="left:1150px;top:856px;width:2px;height:8px;background:#2a2a2a"></div>
<div class="a" style="left:1162px;top:880px;width:1px;height:17px;background:#272727"></div>
<div class="a" style="left:1162px;top:856px;width:2px;height:8px;background:#2a2a2a"></div>
<div class="a" style="left:1160px;top:839px;width:2px;height:13px;background:#2a2a2a"></div>
<div class="t" style="left:1148.5px;width:40px;text-align:center;top:864px;font-size:10px;color:#b8b8b8">50</div>
<div class="a" style="left:1163px;top:880px;width:11px;height:17px;background:#353535"></div>
<div class="a" style="left:1166px;top:880px;width:1px;height:17px;background:#2a2a2a"></div>
<div class="a" style="left:1170px;top:880px;width:1px;height:17px;background:#2a2a2a"></div>
<div class="a" style="left:1174px;top:880px;width:1px;height:17px;background:#272727"></div>
<div class="a" style="left:1174px;top:856px;width:2px;height:8px;background:#2a2a2a"></div>
<div class="a" style="left:1186px;top:880px;width:1px;height:17px;background:#272727"></div>
<div class="a" style="left:1186px;top:856px;width:2px;height:8px;background:#2a2a2a"></div>
<div class="a" style="left:1198px;top:880px;width:1px;height:17px;background:#272727"></div>
<div class="a" style="left:1198px;top:856px;width:2px;height:8px;background:#2a2a2a"></div>
<div class="a" style="left:1210px;top:880px;width:1px;height:17px;background:#272727"></div>
<div class="a" style="left:1210px;top:856px;width:2px;height:8px;background:#2a2a2a"></div>
<div class="a" style="left:1222px;top:880px;width:1px;height:17px;background:#272727"></div>
<div class="a" style="left:1222px;top:856px;width:2px;height:8px;background:#2a2a2a"></div>
<div class="a" style="left:1220px;top:839px;width:2px;height:13px;background:#2a2a2a"></div>
<div class="t" style="left:1208.5px;width:40px;text-align:center;top:864px;font-size:10px;color:#b8b8b8">55</div>
<div class="a" style="left:1223px;top:880px;width:11px;height:17px;background:#3a3a3a"></div>
<div class="a" style="left:1234px;top:880px;width:1px;height:17px;background:#272727"></div>
<div class="a" style="left:1234px;top:856px;width:2px;height:8px;background:#2a2a2a"></div>
<div class="a" style="left:1246px;top:880px;width:1px;height:17px;background:#272727"></div>
<div class="a" style="left:1246px;top:856px;width:2px;height:8px;background:#2a2a2a"></div>
<div class="a" style="left:1258px;top:880px;width:1px;height:17px;background:#272727"></div>
<div class="a" style="left:1258px;top:856px;width:2px;height:8px;background:#2a2a2a"></div>
<div class="a" style="left:1270px;top:880px;width:1px;height:17px;background:#272727"></div>
<div class="a" style="left:1270px;top:856px;width:2px;height:8px;background:#2a2a2a"></div>
<div class="a" style="left:1282px;top:880px;width:1px;height:17px;background:#272727"></div>
<div class="a" style="left:1282px;top:856px;width:2px;height:8px;background:#2a2a2a"></div>
<div class="a" style="left:1280px;top:839px;width:2px;height:13px;background:#2a2a2a"></div>
<div class="t" style="left:1268.5px;width:40px;text-align:center;top:864px;font-size:10px;color:#b8b8b8">60</div>
<div class="a" style="left:1283px;top:880px;width:11px;height:17px;background:#353535"></div>
<div class="a" style="left:1286px;top:880px;width:1px;height:17px;background:#2a2a2a"></div>
<div class="a" style="left:1290px;top:880px;width:1px;height:17px;background:#2a2a2a"></div>
<div class="a" style="left:1294px;top:880px;width:1px;height:17px;background:#272727"></div>
<div class="a" style="left:1294px;top:856px;width:2px;height:8px;background:#2a2a2a"></div>
<div class="a" style="left:1306px;top:880px;width:1px;height:17px;background:#272727"></div>
<div class="a" style="left:1306px;top:856px;width:2px;height:8px;background:#2a2a2a"></div>
<div class="a" style="left:1318px;top:880px;width:1px;height:17px;background:#272727"></div>
<div class="a" style="left:1318px;top:856px;width:2px;height:8px;background:#2a2a2a"></div>
<div class="a" style="left:1330px;top:880px;width:1px;height:17px;background:#272727"></div>
<div class="a" style="left:1330px;top:856px;width:2px;height:8px;background:#2a2a2a"></div>
<div class="a" style="left:1342px;top:880px;width:1px;height:17px;background:#272727"></div>
<div class="a" style="left:1342px;top:856px;width:2px;height:8px;background:#2a2a2a"></div>
<div class="a" style="left:1340px;top:839px;width:2px;height:13px;background:#2a2a2a"></div>
<div class="t" style="left:1328.5px;width:40px;text-align:center;top:864px;font-size:10px;color:#b8b8b8">65</div>
<div class="a" style="left:1343px;top:880px;width:11px;height:17px;background:#3a3a3a"></div>
<div class="a" style="left:1354px;top:880px;width:1px;height:17px;background:#272727"></div>
<div class="a" style="left:1354px;top:856px;width:2px;height:8px;background:#2a2a2a"></div>
<div class="a" style="left:1366px;top:880px;width:1px;height:17px;background:#272727"></div>
<div class="a" style="left:1366px;top:856px;width:2px;height:8px;background:#2a2a2a"></div>
<div class="a" style="left:1378px;top:880px;width:1px;height:17px;background:#272727"></div>
<div class="a" style="left:1378px;top:856px;width:2px;height:8px;background:#2a2a2a"></div>
<div class="a" style="left:1390px;top:880px;width:1px;height:17px;background:#272727"></div>
<div class="a" style="left:1390px;top:856px;width:2px;height:8px;background:#2a2a2a"></div>
<div class="a" style="left:1402px;top:880px;width:1px;height:17px;background:#272727"></div>
<div class="a" style="left:1402px;top:856px;width:2px;height:8px;background:#2a2a2a"></div>
<div class="a" style="left:1400px;top:839px;width:2px;height:13px;background:#2a2a2a"></div>
<div class="t" style="left:1388.5px;width:40px;text-align:center;top:864px;font-size:10px;color:#b8b8b8">70</div>
<div class="a" style="left:1403px;top:880px;width:11px;height:17px;background:#353535"></div>
<div class="a" style="left:1406px;top:880px;width:1px;height:17px;background:#2a2a2a"></div>
<div class="a" style="left:1410px;top:880px;width:1px;height:17px;background:#2a2a2a"></div>
<div class="a" style="left:1414px;top:880px;width:1px;height:17px;background:#272727"></div>
<div class="a" style="left:1414px;top:856px;width:2px;height:8px;background:#2a2a2a"></div>
<div class="a" style="left:1426px;top:880px;width:1px;height:17px;background:#272727"></div>
<div class="a" style="left:1426px;top:856px;width:2px;height:8px;background:#2a2a2a"></div>
<div class="a" style="left:1438px;top:880px;width:1px;height:17px;background:#272727"></div>
<div class="a" style="left:1438px;top:856px;width:2px;height:8px;background:#2a2a2a"></div>
<div class="a" style="left:1450px;top:880px;width:1px;height:17px;background:#272727"></div>
<div class="a" style="left:1450px;top:856px;width:2px;height:8px;background:#2a2a2a"></div>
<div class="a" style="left:1462px;top:880px;width:1px;height:17px;background:#272727"></div>
<div class="a" style="left:1462px;top:856px;width:2px;height:8px;background:#2a2a2a"></div>
<div class="a" style="left:1460px;top:839px;width:2px;height:13px;background:#2a2a2a"></div>
<div class="t" style="left:1448.5px;width:40px;text-align:center;top:864px;font-size:10px;color:#b8b8b8">75</div>
<div class="a" style="left:1463px;top:880px;width:11px;height:17px;background:#3a3a3a"></div>
<div class="a" style="left:1474px;top:880px;width:1px;height:17px;background:#272727"></div>
<div class="a" style="left:1474px;top:856px;width:2px;height:8px;background:#2a2a2a"></div>
<div class="a" style="left:1486px;top:880px;width:1px;height:17px;background:#272727"></div>
<div class="a" style="left:1486px;top:856px;width:2px;height:8px;background:#2a2a2a"></div>
<div class="a" style="left:1498px;top:880px;width:1px;height:17px;background:#272727"></div>
<div class="a" style="left:1498px;top:856px;width:2px;height:8px;background:#2a2a2a"></div>
<div class="a" style="left:1510px;top:880px;width:1px;height:17px;background:#272727"></div>
<div class="a" style="left:1510px;top:856px;width:2px;height:8px;background:#2a2a2a"></div>
<div class="a" style="left:1522px;top:880px;width:1px;height:17px;background:#272727"></div>
<div class="a" style="left:1522px;top:856px;width:2px;height:8px;background:#2a2a2a"></div>
<div class="a" style="left:1520px;top:839px;width:2px;height:13px;background:#2a2a2a"></div>
<div class="t" style="left:1508.5px;width:40px;text-align:center;top:864px;font-size:10px;color:#b8b8b8">80</div>
<div class="a" style="left:1523px;top:880px;width:11px;height:17px;background:#353535"></div>
<div class="a" style="left:1526px;top:880px;width:1px;height:17px;background:#2a2a2a"></div>
<div class="a" style="left:1530px;top:880px;width:1px;height:17px;background:#2a2a2a"></div>
<div class="a" style="left:1534px;top:880px;width:1px;height:17px;background:#272727"></div>
<div class="a" style="left:1534px;top:856px;width:2px;height:8px;background:#2a2a2a"></div>
<div class="a" style="left:1546px;top:880px;width:1px;height:17px;background:#272727"></div>
<div class="a" style="left:1546px;top:856px;width:2px;height:8px;background:#2a2a2a"></div>
<div class="a" style="left:1558px;top:880px;width:1px;height:17px;background:#272727"></div>
<div class="a" style="left:1558px;top:856px;width:2px;height:8px;background:#2a2a2a"></div>
<div class="a" style="left:1570px;top:880px;width:1px;height:17px;background:#272727"></div>
<div class="t" style="left:923px;top:841px;font-size:9px;color:#a8a8a8;font-style:italic;text-decoration:underline">1s</div>
<div class="t" style="left:1283px;top:841px;font-size:9px;color:#a8a8a8;font-style:italic;text-decoration:underline">2s</div>
<div class="a" style="left:575px;top:897px;width:993px;height:1px;background:#2a2a2a"></div>
<div class="a" style="left:576px;top:885px;width:9px;height:9px;border:1px solid #7a7a7a;border-radius:50%"></div>
<!-- playhead -->
<div class="a" style="left:579px;top:870px;width:3px;height:191px;background:#1e3a5a"></div>
<div class="a" style="left:580px;top:870px;width:1px;height:191px;background:#9cc2ea"></div>
<svg style="left:574px;top:837px" width="13" height="43" viewBox="0 0 13 43"><path d="M1 2.5 Q1 1 2.5 1 H10.5 Q12 1 12 2.5 V36 L6.5 41.5 L1 36 Z" fill="#3c8ae6" stroke="#16304c" stroke-width="1"/><path d="M2 2 H11 V35.5 L6.5 40 L2 35.5 Z" fill="none" stroke="#6aa8f0" stroke-width="0.6" opacity="0.7"/></svg>
<!-- bottom -->
<div class="a" style="left:52px;top:1061px;width:1516px;height:1px;background:#282828"></div>
<div class="a" style="left:576px;top:1069px;width:136px;height:4px;background:#7a7a7a;border-radius:2px"></div>


<!-- ================= RIGHT DOCK ================= -->
<div class="a" style="left:1572px;top:40px;width:3px;height:1040px;background:#262626"></div>
<div class="a" style="left:1575px;top:40px;width:345px;height:10px;background:#303030"></div>
<svg style="left:1599px;top:43px" width="9" height="6" viewBox="0 0 9 6"><path d="M3.5 0.5 L1 3 L3.5 5.5 M7.5 0.5 L5 3 L7.5 5.5" fill="none" stroke="#e0e0e0" stroke-width="1.3"/></svg>
<svg style="left:1905px;top:43px" width="9" height="6" viewBox="0 0 9 6"><path d="M1.5 0.5 L4 3 L1.5 5.5 M5.5 0.5 L8 3 L5.5 5.5" fill="none" stroke="#e0e0e0" stroke-width="1.3"/></svg>
<div class="a" style="left:1575px;top:50px;width:345px;height:2px;background:#272727"></div>
<div class="a" style="left:1575px;top:52px;width:38px;height:1028px;background:#323232"></div>
<div class="a" style="left:1576px;top:53px;width:35px;height:65px;background:#323232;border-bottom:1px solid #262626"></div>
<div class="a" style="left:1576px;top:120px;width:35px;height:97px;background:#323232;border-bottom:1px solid #262626"></div>
<div class="a" style="left:1576px;top:219px;width:35px;height:66px;background:#323232;border-bottom:1px solid #262626"></div>
<div class="a" style="left:1576px;top:287px;width:35px;height:43px;background:#323232;border-bottom:1px solid #262626"></div>
<div class="a" style="left:1584px;top:57px;width:1px;height:5px;background:#505050"></div><div class="a" style="left:1586px;top:57px;width:1px;height:5px;background:#505050"></div><div class="a" style="left:1588px;top:57px;width:1px;height:5px;background:#505050"></div><div class="a" style="left:1590px;top:57px;width:1px;height:5px;background:#505050"></div><div class="a" style="left:1592px;top:57px;width:1px;height:5px;background:#505050"></div><div class="a" style="left:1594px;top:57px;width:1px;height:5px;background:#505050"></div><div class="a" style="left:1596px;top:57px;width:1px;height:5px;background:#505050"></div><div class="a" style="left:1598px;top:57px;width:1px;height:5px;background:#505050"></div><div class="a" style="left:1584px;top:124px;width:1px;height:5px;background:#505050"></div><div class="a" style="left:1586px;top:124px;width:1px;height:5px;background:#505050"></div><div class="a" style="left:1588px;top:124px;width:1px;height:5px;background:#505050"></div><div class="a" style="left:1590px;top:124px;width:1px;height:5px;background:#505050"></div><div class="a" style="left:1592px;top:124px;width:1px;height:5px;background:#505050"></div><div class="a" style="left:1594px;top:124px;width:1px;height:5px;background:#505050"></div><div class="a" style="left:1596px;top:124px;width:1px;height:5px;background:#505050"></div><div class="a" style="left:1598px;top:124px;width:1px;height:5px;background:#505050"></div><div class="a" style="left:1584px;top:223px;width:1px;height:5px;background:#505050"></div><div class="a" style="left:1586px;top:223px;width:1px;height:5px;background:#505050"></div><div class="a" style="left:1588px;top:223px;width:1px;height:5px;background:#505050"></div><div class="a" style="left:1590px;top:223px;width:1px;height:5px;background:#505050"></div><div class="a" style="left:1592px;top:223px;width:1px;height:5px;background:#505050"></div><div class="a" style="left:1594px;top:223px;width:1px;height:5px;background:#505050"></div><div class="a" style="left:1596px;top:223px;width:1px;height:5px;background:#505050"></div><div class="a" style="left:1598px;top:223px;width:1px;height:5px;background:#505050"></div><div class="a" style="left:1584px;top:291px;width:1px;height:5px;background:#505050"></div><div class="a" style="left:1586px;top:291px;width:1px;height:5px;background:#505050"></div><div class="a" style="left:1588px;top:291px;width:1px;height:5px;background:#505050"></div><div class="a" style="left:1590px;top:291px;width:1px;height:5px;background:#505050"></div><div class="a" style="left:1592px;top:291px;width:1px;height:5px;background:#505050"></div><div class="a" style="left:1594px;top:291px;width:1px;height:5px;background:#505050"></div><div class="a" style="left:1596px;top:291px;width:1px;height:5px;background:#505050"></div><div class="a" style="left:1598px;top:291px;width:1px;height:5px;background:#505050"></div>
<svg style="left:1584px;top:64px" width="19" height="17" viewBox="0 0 19 17"><path d="M10 1 C15 1 18.5 4 18.5 8 C18.5 11 16 12 14 11 C12 10.5 11 12 12 14 C13 16 10 16.5 8 16.5 C4 16.5 0.5 14 0.5 10 C0.5 5 4.5 1 10 1 Z" fill="#c8c8c8"/><circle cx="4.5" cy="10.5" r="1.8" fill="#303030"/><circle cx="7.5" cy="13.5" r="1.6" fill="#303030"/><circle cx="11" cy="5" r="1.6" fill="#303030"/><circle cx="15" cy="7" r="1.5" fill="#303030"/><circle cx="7" cy="6" r="1.4" fill="#303030"/></svg>
<svg style="left:1585px;top:96px" width="16" height="12" viewBox="0 0 16 12"><rect width="16" height="12" fill="#c8c8c8"/><path d="M0 6H16M8 0V12" stroke="#303030" stroke-width="1"/><rect x="9" y="1" width="6" height="4" fill="#8a8a8a"/><rect x="1" y="7" width="6" height="4" fill="#8a8a8a"/></svg>
<svg style="left:1586px;top:134px" width="15" height="18" viewBox="0 0 15 18"><rect x="0" y="0" width="1.5" height="18" fill="#c8c8c8"/><rect x="3" y="3" width="7" height="4" fill="#c8c8c8"/><rect x="3" y="10" width="12" height="4" fill="#c8c8c8"/></svg>
<svg style="left:1586px;top:163px" width="16" height="16" viewBox="0 0 16 16"><circle cx="8" cy="8" r="7.5" fill="#c8c8c8"/><circle cx="8" cy="4.3" r="1.4" fill="#303030"/><path d="M6.2 7H9V12H10V13H6V12H7V8H6.2Z" fill="#303030"/></svg>
<svg style="left:1586px;top:192px" width="16" height="16" viewBox="0 0 16 16"><rect x="2.5" y="2.5" width="11" height="11" fill="none" stroke="#c8c8c8" stroke-width="1" stroke-dasharray="2 1"/><rect x="0" y="0" width="4" height="4" fill="#c8c8c8"/><rect x="12" y="0" width="4" height="4" fill="#c8c8c8"/><rect x="0" y="12" width="4" height="4" fill="#c8c8c8"/><rect x="12" y="12" width="4" height="4" fill="#c8c8c8"/><rect x="6" y="0" width="4" height="3" fill="#c8c8c8"/><rect x="6" y="13" width="4" height="3" fill="#c8c8c8"/></svg>
<svg style="left:1584px;top:232px" width="18" height="16" viewBox="0 0 18 16"><rect x="0" y="1" width="3" height="15" fill="#c8c8c8"/><rect x="4" y="0" width="4" height="16" fill="#c8c8c8"/><path d="M9 2 L12 1 L17.5 15 L14.5 16 Z" fill="#c8c8c8"/><rect x="5" y="7" width="2" height="1.5" fill="#303030"/></svg>
<svg style="left:1585px;top:259px" width="17" height="17" viewBox="0 0 17 17"><circle cx="4" cy="13" r="3.8" fill="#c8c8c8"/><circle cx="10" cy="9.5" r="2.8" fill="#c8c8c8"/><circle cx="14" cy="4" r="2.5" fill="#c8c8c8"/></svg>
<svg style="left:1585px;top:301px" width="17" height="17" viewBox="0 0 17 17"><rect x="0.5" y="0.5" width="13.5" height="13" fill="none" stroke="#c8c8c8" stroke-width="1"/><rect x="2.5" y="2.5" width="14" height="14" fill="none" stroke="#c8c8c8" stroke-width="1.2"/><path d="M10 2 V9 L11.5 7.5 L13 9 V2 Z" fill="#c8c8c8"/></svg>
<div class="a" style="left:1612px;top:52px;width:3px;height:1028px;background:#262626"></div>

<!-- ================= PROPERTIES ================= -->
<div class="a" style="left:1615px;top:52px;width:305px;height:1028px;background:#323232"></div>
<div class="a" style="left:1679px;top:52px;width:241px;height:17px;background:#2d2d2d"></div>
<div class="a" style="left:1678px;top:52px;width:1px;height:17px;background:#262626"></div>
<div class="t" style="left:1622px;top:55px;font-size:10px;font-weight:bold;color:#ececec">Properties</div>
<div class="t" style="left:1685px;top:55px;font-size:10px;font-weight:bold;color:#777777">Assets</div>
<svg style="left:1903px;top:56px" width="11" height="8" viewBox="0 0 11 8"><path d="M0 0.5H11M0 2.5H11M0 4.5H11M0 6.5H11" stroke="#cccccc" stroke-width="1"/></svg>
<div class="a" style="left:1621px;top:80px;width:73px;height:32px;background:#454545;border-radius:4px"></div>
<div class="t" style="left:1644px;top:89px;font-size:13px;color:#f0f0f0">Tool</div>
<div class="t" style="left:1711px;top:89px;font-size:13px;color:#7a7a7a">Object</div>
<div class="a" style="left:1766px;top:80px;width:1px;height:32px;background:#3c3c3c"></div>
<div class="t" style="left:1784px;top:89px;font-size:13px;color:#7a7a7a">Frame</div>
<div class="a" style="left:1839px;top:80px;width:1px;height:32px;background:#3c3c3c"></div>
<div class="t" style="left:1865px;top:89px;font-size:13px;color:#ececec">Doc</div>
<div class="a" style="left:1615px;top:119px;width:305px;height:2px;background:#262626"></div>
<svg style="left:1641px;top:136px" width="16" height="16" viewBox="0 0 16 16"><path d="M9 0.5 L15.5 7 L13.5 8 L11.5 7.5 L8.5 10.5 L9 13 L7.5 14.5 L1.5 8.5 L3 7 L5.5 7.5 L8.5 4.5 L8 2.5 Z" fill="#c8c8c8"/><path d="M4.5 11.5 L0.5 15.5" stroke="#c8c8c8" stroke-width="1.5"/></svg>
<div class="t" style="left:1678px;top:138px;font-size:13px;color:#a8a8a8">Asset Warp</div>
<div class="a" style="left:1615px;top:168px;width:305px;height:2px;background:#262626"></div>
<svg style="left:1634px;top:185px" width="11" height="7" viewBox="0 0 11 7"><path d="M1 1 L5.5 5.5 L10 1" fill="none" stroke="#d0d0d0" stroke-width="1.8"/></svg>
<div class="t" style="left:1656px;top:184px;font-size:13px;font-weight:bold;color:#c4c4c4">Warp Options</div>
<svg style="left:1635px;top:221px" width="17" height="12" viewBox="0 0 17 12"><path d="M0.8 6 C3.5 0.5 13.5 0.5 16.2 6 C13.5 11.5 3.5 11.5 0.8 6 Z" fill="#c8c8c8"/><circle cx="8.5" cy="6" r="3.3" fill="#323232"/><circle cx="8.5" cy="6" r="1.8" fill="#c8c8c8"/></svg>
<div class="pl" style="left:1664px;top:222px;color:#9a9a9a">Mesh</div>
<div class="pl" style="left:1636px;top:252px">Envelope</div>
<div class="a" style="left:1873px;top:250px;width:27px;height:14px;background:#cacaca;border-radius:7px"></div>
<div class="a" style="left:1887px;top:252px;width:10px;height:10px;background:#242424;border-radius:50%"></div>
<div class="pl" style="left:1636px;top:284px">Create bones</div>
<div class="a" style="left:1873px;top:282px;width:27px;height:14px;background:#3a3a3a;border-radius:7px"></div>
<div class="a" style="left:1873px;top:282px;width:14px;height:14px;border:2px solid #b4b4b4;border-radius:50%;background:#2a2a2a"></div>
<div class="pl" style="left:1636px;top:316px">Bone type</div>
<div class="a" style="left:1720px;top:314px;width:14px;height:14px;border-radius:50%;background:#5a5a5a"></div>
<div class="a" style="left:1726px;top:320px;width:2px;height:2px;background:#2a2a2a"></div>
<div class="pl" style="left:1745px;top:316px;color:#6e6e6e">Hard</div>
<div class="a" style="left:1785px;top:314px;width:14px;height:14px;border-radius:50%;border:2px solid #5a5a5a"></div>
<div class="pl" style="left:1810px;top:316px;color:#6e6e6e">Soft</div>
<div class="a" style="left:1845px;top:314px;width:14px;height:14px;border-radius:50%;border:2px solid #5a5a5a"></div>
<div class="pl" style="left:1870px;top:316px;color:#6e6e6e">Flexi</div>
<div class="a" style="left:1615px;top:381px;width:305px;height:2px;background:#252525"></div>
<div class="a" style="left:1918px;top:52px;width:2px;height:1028px;background:#282828"></div>
<div class="pl" style="left:1636px;top:348px">Propagate changes</div>
<div class="a" style="left:1873px;top:346px;width:27px;height:14px;background:#cacaca;border-radius:7px"></div>
<div class="a" style="left:1887px;top:348px;width:10px;height:10px;background:#242424;border-radius:50%"></div>


<!-- ================= TOOL ICONS ================= -->
<svg style="left:19px;top:85px" width="14" height="18" viewBox="0 0 14 18"><path d="M1 1 L13 11 L7.5 11.5 L4.5 16.5 Z" fill="none" stroke="#c4c4c4" stroke-width="1.5" stroke-linejoin="round"/></svg>
<div class="ind" style="left:36px;top:105px"></div>
<svg style="left:16px;top:119px" width="20" height="17" viewBox="0 0 20 17"><path d="M0 0 L0 15 L9 8 Z" fill="#c4c4c4"/><rect x="5.5" y="1.5" width="12" height="13" fill="none" stroke="#c4c4c4" stroke-width="1.2" stroke-dasharray="2 1"/><rect x="4.5" y="0.5" width="2" height="2" fill="#c4c4c4"/><rect x="16.5" y="0.5" width="2" height="2" fill="#c4c4c4"/><rect x="4.5" y="13.5" width="2" height="2" fill="#c4c4c4"/><rect x="16.5" y="13.5" width="2" height="2" fill="#c4c4c4"/></svg>
<div class="ind" style="left:36px;top:139px"></div>
<svg style="left:16px;top:154px" width="18" height="18" viewBox="0 0 18 18"><ellipse cx="9.5" cy="6.5" rx="7.5" ry="5" fill="none" stroke="#c4c4c4" stroke-width="1.3"/><circle cx="4" cy="11" r="2" fill="none" stroke="#c4c4c4" stroke-width="1.2"/><path d="M4 13 Q3 16 5 17" fill="none" stroke="#c4c4c4" stroke-width="1.2"/></svg>
<div class="ind" style="left:36px;top:173px"></div>
<div class="tsepH" style="top:182px"></div>
<svg style="left:16px;top:194px" width="22" height="19" viewBox="0 0 22 19"><path d="M18 0.5 L20 2 L11 11 L9.5 9.5 Z" fill="#c4c4c4"/><path d="M8.5 10 L10.5 12 C9.5 16 5 17.5 1 17.5 C3 16 3 12 8.5 10 Z" fill="#c4c4c4"/><circle cx="16" cy="14" r="4.5" fill="#9a9a9a"/></svg>
<svg style="left:16px;top:229px" width="18" height="17" viewBox="0 0 18 17"><path d="M15.5 0.5 L17.5 2.5 L9.5 10 L7.5 8 Z" fill="#c4c4c4"/><path d="M6.5 8.5 L9 11 C8 15 4.5 16.5 0.5 16.5 C2.5 14.5 2 10 6.5 8.5 Z" fill="#c4c4c4"/></svg>
<svg style="left:16px;top:263px" width="19" height="18" viewBox="0 0 19 18"><path d="M11 1 L18 8 L10 16 L3 9 Z" fill="#c4c4c4"/><path d="M6.5 12.5 L10 16 L7.5 17 H4.5 L1.5 14 L2.5 11 Z" fill="none" stroke="#c4c4c4" stroke-width="1.3"/></svg>
<svg style="left:16px;top:298px" width="17" height="15" viewBox="0 0 17 15"><rect x="0.75" y="0.75" width="15.5" height="13.5" fill="#7a7a7a" stroke="#c4c4c4" stroke-width="1.5"/></svg>
<div class="ind" style="left:36px;top:317px"></div>
<svg style="left:16px;top:332px" width="17" height="16" viewBox="0 0 17 16"><path d="M1 15 L16 1" stroke="#c4c4c4" stroke-width="1.8"/></svg>
<div class="tsepH" style="top:360px"></div>
<svg style="left:16px;top:374px" width="18" height="18" viewBox="0 0 18 18"><path d="M12 0.5 L17.5 6 L15 8 L10 3 Z" fill="#c4c4c4"/><path d="M9.5 3.5 L14.5 8.5 L12.5 13 L1 17 L5 5.5 Z" fill="#c4c4c4"/><path d="M1.5 16.5 L7 11" stroke="#303030" stroke-width="1"/><circle cx="8" cy="10" r="1.3" fill="#303030"/></svg>
<div class="ind" style="left:36px;top:394px"></div>
<svg style="left:17px;top:408px" width="16" height="15" viewBox="0 0 16 15"><path d="M1 4 V1 H15 V4 M8 1 V14 M5 14 H11" fill="none" stroke="#c4c4c4" stroke-width="1.8"/></svg>
<svg style="left:16px;top:441px" width="22" height="19" viewBox="0 0 22 19"><path d="M6 1.5 L8 3.5" stroke="#c4c4c4" stroke-width="2"/><path d="M7 4 L16 10 L11 17 L2 11 Z" fill="#c4c4c4"/><path d="M16 10 C18 10.5 19.5 12 19 14 C18.5 15 18 16 19 17" fill="none" stroke="#c4c4c4" stroke-width="1.3"/></svg>
<div class="ind" style="left:36px;top:464px"></div>
<svg style="left:16px;top:475px" width="18" height="20" viewBox="0 0 18 20"><path d="M12 1 C13.5 -0.5 17.5 3 16 5 L14 7 L10.5 3.5 Z" fill="#c4c4c4"/><path d="M10 4.5 L13 7.5 L4.5 16 L1.5 18.5 L0.5 17.5 L3 14.5 Z" fill="none" stroke="#c4c4c4" stroke-width="1.3"/></svg>
<div class="a" style="left:9px;top:502px;width:32px;height:31px;background:#454545;border-radius:3px"></div>
<svg style="left:16px;top:507px" width="17" height="22" viewBox="0 0 17 21"><path d="M10 0.5 L16.5 7 L14.5 8 L12.5 7.5 L9.5 10.5 L10 13 L8.5 14.5 L2.5 8.5 L4 7 L6.5 7.5 L9.5 4.5 L9 2.5 Z" fill="#f2f2f2"/><path d="M5.5 11.5 L1 16" stroke="#f2f2f2" stroke-width="1.6"/></svg>
<div class="tsepH" style="top:538px"></div>
<svg style="left:17px;top:551px" width="17" height="18" viewBox="0 0 17 18"><path d="M4.5 17.5 C2 15 0.5 12.5 0.5 11 L1.5 9.5 L3.5 11.5 V3.5 C3.5 2.5 5 2.5 5 3.5 V8 V1.5 C5 0.5 6.5 0.5 6.5 1.5 V8 V1 C6.5 0 8 0 8 1 V8 V2 C8 1 9.5 1 9.5 2 V8 V4 C9.5 3 11 3 11 4 V12 C11 15 10 17.5 9 17.5 Z" fill="#c4c4c4" transform="scale(1.35,1) translate(-0.3,0)"/></svg>
<div class="ind" style="left:36px;top:571px"></div>
<svg style="left:17px;top:585px" width="17" height="17" viewBox="0 0 17 17"><circle cx="6.5" cy="6.5" r="5.3" fill="none" stroke="#c4c4c4" stroke-width="1.6"/><path d="M10.5 10.5 L16 16" stroke="#c4c4c4" stroke-width="2.2"/></svg>
<div class="a" style="left:17px;top:632px;width:4px;height:4px;border-radius:50%;background:#c4c4c4"></div>
<div class="a" style="left:23px;top:632px;width:4px;height:4px;border-radius:50%;background:#c4c4c4"></div>
<div class="a" style="left:29px;top:632px;width:4px;height:4px;border-radius:50%;background:#c4c4c4"></div>
<svg style="left:9px;top:651px" width="13" height="13" viewBox="0 0 13 13"><rect x="3.5" y="3.5" width="9" height="9" fill="#111" stroke="#f0f0f0" stroke-width="1"/><rect x="0.5" y="0.5" width="7" height="7" fill="#f0f0f0" stroke="#111" stroke-width="1"/></svg>
<svg style="left:28px;top:652px" width="12" height="13" viewBox="0 0 12 13"><path d="M2 4 C4 1 8 1 9.5 5 L10 11" fill="none" stroke="#c4c4c4" stroke-width="1.5"/><path d="M0 5 L2.5 2 L4.5 5.5 Z M8 9 L10 12.5 L12 9 Z" fill="#c4c4c4"/></svg>
<div class="a" style="left:20px;top:681px;width:21px;height:21px;background:#111;border:1.5px solid #f0f0f0"></div>
<div class="a" style="left:24px;top:685px;width:13px;height:13px;border:1.5px solid #f0f0f0;background:#2a3038"></div>
<div class="a" style="left:10px;top:671px;width:20px;height:20px;background:#9e3a0c;border:1.5px solid #f2e6d8"></div>


<!-- ================= WEBCAM ================= -->
<div class="a" style="left:1583px;top:859px;width:322px;height:183px;background:#1c1c1a"></div>
<svg style="left:1584px;top:861px" width="320" height="180" viewBox="0 0 320 180">
<defs>
<linearGradient id="wall" x1="0" y1="0" x2="1" y2="0"><stop offset="0" stop-color="#bdb29e"/><stop offset="0.12" stop-color="#cbb294"/><stop offset="0.5" stop-color="#d6b492"/><stop offset="1" stop-color="#e0c29e"/></linearGradient>
<radialGradient id="face" cx="0.5" cy="0.3" r="0.75"><stop offset="0" stop-color="#c8a4a6"/><stop offset="0.5" stop-color="#b8a8bc"/><stop offset="1" stop-color="#a8a0b2"/></radialGradient>
<linearGradient id="blshade" x1="0" y1="0" x2="0" y2="1"><stop offset="0" stop-color="#28282a" stop-opacity="0.45"/><stop offset="0.45" stop-color="#28282a" stop-opacity="0"/></linearGradient>
<clipPath id="wc"><rect width="320" height="180"/></clipPath>
</defs>
<g clip-path="url(#wc)">
<rect width="320" height="180" fill="url(#wall)"/>
<rect y="120" width="320" height="60" fill="#7a6a70" opacity="0.12"/>
<!-- window frame -->
<rect x="227" y="0" width="22" height="70" fill="#e4e0da"/>
<rect x="243" y="0" width="6" height="155" fill="#b0a080"/>
<!-- blinds -->
<rect x="249" y="0" width="71" height="152" fill="#c4a658"/>
<path d="M249 -2 L320 -15 L320 -12 L249 1 Z" fill="#3a2c30"/><path d="M249 6 L320 -7 L320 -4 L249 9 Z" fill="#3a2c30"/><path d="M249 14 L320 1 L320 4 L249 17 Z" fill="#3a2c30"/><path d="M249 22 L320 9 L320 12 L249 25 Z" fill="#3a2c30"/><path d="M249 30 L320 17 L320 20 L249 33 Z" fill="#3a2c30"/><path d="M249 38 L320 25 L320 28 L249 41 Z" fill="#3a2c30"/><path d="M249 46 L320 33 L320 36 L249 49 Z" fill="#3a2c30"/><path d="M249 54 L320 41 L320 44 L249 57 Z" fill="#3a2c30"/><path d="M249 62 L320 49 L320 52 L249 65 Z" fill="#3a2c30"/><path d="M249 70 L320 57 L320 60 L249 73 Z" fill="#3a2c30"/><path d="M249 78 L320 65 L320 68 L249 81 Z" fill="#3a2c30"/><path d="M249 86 L320 73 L320 76 L249 89 Z" fill="#3a2c30"/><path d="M249 94 L320 81 L320 84 L249 97 Z" fill="#3a2c30"/><path d="M249 102 L320 89 L320 92 L249 105 Z" fill="#3a2c30"/><path d="M249 110 L320 97 L320 100 L249 113 Z" fill="#3a2c30"/><path d="M249 118 L320 105 L320 108 L249 121 Z" fill="#3a2c30"/><path d="M249 126 L320 113 L320 116 L249 129 Z" fill="#3a2c30"/><path d="M249 134 L320 121 L320 124 L249 137 Z" fill="#3a2c30"/><path d="M249 142 L320 129 L320 132 L249 145 Z" fill="#3a2c30"/><path d="M249 150 L320 137 L320 140 L249 153 Z" fill="#3a2c30"/><path d="M249 158 L320 145 L320 148 L249 161 Z" fill="#3a2c30"/><path d="M249 166 L320 153 L320 156 L249 169 Z" fill="#3a2c30"/><path d="M249 174 L320 161 L320 164 L249 177 Z" fill="#3a2c30"/><path d="M249 182 L320 169 L320 172 L249 185 Z" fill="#3a2c30"/><path d="M249 190 L320 177 L320 180 L249 193 Z" fill="#3a2c30"/><path d="M249 198 L320 185 L320 188 L249 201 Z" fill="#3a2c30"/>
<rect x="249" y="0" width="71" height="152" fill="url(#blshade)"/>
<rect x="283" y="0" width="2" height="152" fill="#e0e0ec" opacity="0.55"/>
<!-- picture frames -->
<rect x="15" y="35" width="63" height="55" fill="#262222"/>
<rect x="17" y="37" width="59" height="51" fill="#ece8e2"/>
<rect x="22" y="42" width="49" height="40" fill="#dcdad8" stroke="#5a5a62" stroke-width="2"/>
<rect x="189" y="-2" width="19" height="17" fill="#2e2a28"/>
<rect x="191" y="-2" width="15" height="14" fill="#d0ccc4"/>
<!-- railing -->
<rect x="0" y="112" width="140" height="3" fill="#756a62"/>
<rect x="0" y="126" width="38" height="3" fill="#756a62"/>
<rect x="19" y="112" width="3" height="68" fill="#756a62"/>
<rect x="0" y="172" width="36" height="8" fill="#3a3434"/>
<!-- chair -->
<path d="M35 180 L36 128 Q38 117 55 116 L150 115 L160 180 Z" fill="#2b2830"/>
<path d="M38 180 L40 140 Q45 135 55 140 L58 180 Z" fill="#35375a" opacity="0.8"/>
<path d="M78 118 L88 175" stroke="#1c1a20" stroke-width="2.5"/>
<!-- desk right -->
<rect x="256" y="154" width="64" height="26" fill="#1a181c"/>
<path d="M248 150 L320 146 L320 154 L252 157 Z" fill="#d8d4cc"/>
<!-- right shirt -->
<path d="M238 180 L242 156 Q260 150 275 160 L290 180 Z" fill="#cdc8c0"/>
<!-- neck -->
<path d="M150 118 L168 110 L200 160 L190 180 L150 180 Z" fill="#2b2830"/>
<path d="M163 120 Q170 150 195 170 L200 180 L158 180 Q160 150 163 120 Z" fill="#aa9cac"/>
<!-- face -->
<path d="M165 75 Q168 52 200 50 Q240 48 256 62 Q258 100 252 125 Q248 155 235 167 Q215 175 195 168 Q175 158 168 135 Q163 110 165 75 Z" fill="url(#face)"/>
<path d="M200 120 Q215 112 235 122 Q232 140 215 142 Q200 138 200 120 Z" fill="#cfa4ac" opacity="0.35"/>
<path d="M178 166 Q210 158 250 170 L252 180 L175 180 Z" fill="#c0b0ba"/>
<!-- glasses -->
<path d="M171 87 L262 104" stroke="#6e6e78" stroke-width="1.6"/>
<path d="M200 97 Q230 98 262 104 L258 116 Q230 114 204 110 Z" fill="none" stroke="#9a9aa6" stroke-width="1.3"/>
<!-- hair -->
<path d="M150 45 Q160 20 187 17 Q220 12 240 22 Q258 35 259 60 Q250 62 240 55 Q225 48 210 50 Q190 52 182 62 Q175 72 170 82 Q160 70 150 45 Z" fill="#46403e"/>
<path d="M160 40 Q175 25 195 28 Q205 35 190 42 Q175 45 165 55 Z" fill="#5a5450" opacity="0.7"/>
<!-- white collar / shirt left -->
<path d="M70 180 Q100 150 140 140 L155 127 Q162 130 160 140 L150 180 Z" fill="#dcdce4"/>
<path d="M148 140 L162 138 L160 180 L150 180 Z" fill="#3a2840"/>
<!-- headphones -->
<path d="M133 62 Q131 40 142 30 Q155 19 178 18 L180 24 Q158 26 150 36 Q142 46 142 62 Z" fill="#1f1f24"/>
<rect x="131" y="61" width="34" height="64" rx="12" fill="#1c1c22"/>
<rect x="134" y="72" width="8" height="46" rx="4" fill="#2c3048"/>
</g>
</svg>
<!-- cursor -->
<svg style="left:101px;top:984px" width="12" height="18" viewBox="0 0 12 18"><path d="M1 1 L1 14 L4 11 L6.5 16.5 L8.5 15.5 L6 10.5 L10.5 10.5 Z" fill="#e8e8e8" stroke="#111" stroke-width="1"/></svg>

</body></html>
